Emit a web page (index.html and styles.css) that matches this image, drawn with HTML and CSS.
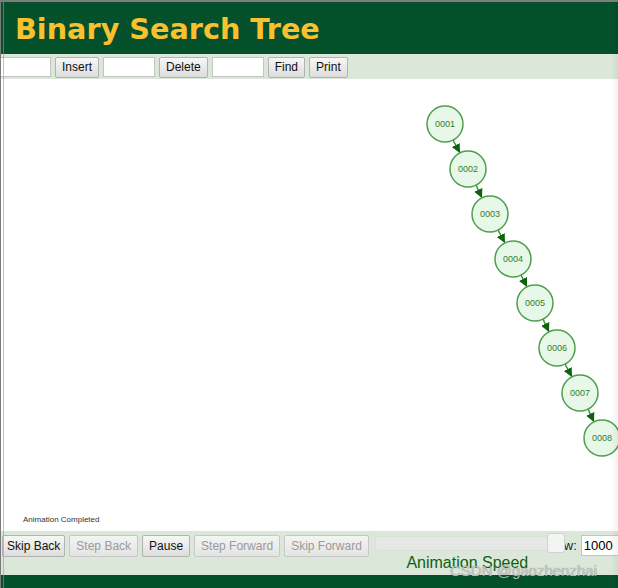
FILE: index.html
```html
<!DOCTYPE html>
<html>
<head>
<meta charset="utf-8">
<title>Binary Search Tree</title>
<link rel="stylesheet" href="styles.css">
</head>
<body>
<div class="page">
  <header class="title-bar"><h1 class="title">Binary Search Tree</h1></header>
  <div class="toolbar">
    <input class="field first" type="text">
    <button class="btn">Insert</button>
    <input class="field" type="text">
    <button class="btn">Delete</button>
    <input class="field" type="text">
    <button class="btn">Find</button>
    <button class="btn">Print</button>
  </div>
  <main class="canvas">
    <svg class="tree" width="618" height="452" viewBox="0 79 618 452" xmlns="http://www.w3.org/2000/svg">
      <defs>
        <marker id="arrow" viewBox="0 0 10 10" refX="10" refY="5" markerWidth="9" markerHeight="9" markerUnits="userSpaceOnUse" orient="auto">
          <path d="M0,0 L10,5 L0,10 z" fill="#0b640b"/>
        </marker>
      </defs>
      <g class="edges">
        <line x1="453" y1="140" x2="460" y2="153" marker-end="url(#arrow)"/>
        <line x1="476" y1="185" x2="482" y2="198" marker-end="url(#arrow)"/>
        <line x1="498" y1="230" x2="505" y2="243" marker-end="url(#arrow)"/>
        <line x1="521" y1="275" x2="527" y2="287" marker-end="url(#arrow)"/>
        <line x1="543" y1="319" x2="549" y2="332" marker-end="url(#arrow)"/>
        <line x1="565" y1="364" x2="572" y2="377" marker-end="url(#arrow)"/>
        <line x1="588" y1="409" x2="594" y2="422" marker-end="url(#arrow)"/>
      </g>
      <g class="nodes">
        <circle cx="445" cy="124" r="18"/><text x="445" y="127">0001</text>
        <circle cx="468" cy="169" r="18"/><text x="468" y="172">0002</text>
        <circle cx="490" cy="214" r="18"/><text x="490" y="217">0003</text>
        <circle cx="513" cy="259" r="18"/><text x="513" y="262">0004</text>
        <circle cx="535" cy="303" r="18"/><text x="535" y="306">0005</text>
        <circle cx="557" cy="348" r="18"/><text x="557" y="351">0006</text>
        <circle cx="580" cy="393" r="18"/><text x="580" y="396">0007</text>
        <circle cx="602" cy="438" r="18"/><text x="602" y="441">0008</text>
      </g>
    </svg>
    <div class="status">Animation Completed</div>
  </main>
  <div class="controls">
    <button class="btn big first">Skip Back</button>
    <button class="btn big" disabled>Step Back</button>
    <button class="btn big">Pause</button>
    <button class="btn big" disabled>Step Forward</button>
    <button class="btn big" disabled>Skip Forward</button>
    <div class="speed">
      <div class="track"><span class="thumb"></span></div>
      <div class="speed-label">Animation Speed</div>
    </div>
    <span class="w-label">w:</span>
    <input class="field width-field" type="text" value="1000">
  </div>
  <footer class="footer"></footer>
  <div class="edge-left"></div>
  <div class="edge-right"></div>
  <div class="watermark">CSDN @gaozhenzhai</div>
</div>
</body>
</html>
```
FILE: styles.css
```css
html, body {
  margin: 0;
  padding: 0;
  background: #ffffff;
}
.page {
  position: relative;
  width: 618px;
  height: 588px;
  overflow: hidden;
  font-family: "Liberation Sans", Arial, sans-serif;
  display: flex;
  flex-direction: column;
  border-top: 2px solid #7d7d7d;
  box-sizing: border-box;
}
.title-bar {
  background: #03502b;
  height: 52px;
  flex: none;
  display: flex;
  align-items: center;
  padding-left: 15px;
}
.title {
  margin: 0;
  font-family: "DejaVu Sans", Verdana, sans-serif;
  font-weight: bold;
  font-size: 28.7px;
  color: #f8c12d;
  white-space: nowrap;
  position: relative;
  top: 1px;
}
.toolbar {
  flex: none;
  height: 25px;
  background: #dae7d9;
  display: flex;
  align-items: flex-start;
  gap: 4px;
  padding-top: 3px;
  box-sizing: border-box;
}
.field {
  flex: none;
  width: 52px;
  height: 20px;
  box-sizing: border-box;
  border: 1px solid #c4c4c4;
  background: #fff;
  padding: 0 2px;
  font-family: "Liberation Sans", Arial, sans-serif;
  font-size: 13px;
}
.field.first {
  margin-left: -1px;
}
.btn {
  flex: none;
  white-space: nowrap;
  height: 21px;
  box-sizing: border-box;
  border: 1px solid #b3b3b3;
  border-radius: 2px;
  background: linear-gradient(#f7f7f7, #dddddd);
  padding: 0 6px;
  font-family: "Liberation Sans", Arial, sans-serif;
  font-size: 12px;
  color: #111;
  line-height: 19px;
}
.btn[disabled] {
  color: #9a9a9a;
  background: linear-gradient(#f4f4f4, #e4e4e4);
  border-color: #c8c8c8;
}
.canvas {
  position: relative;
  flex: none;
  height: 452px;
  background: #fff;
  display: flex;
  flex-direction: column;
  justify-content: flex-end;
}
.tree {
  position: absolute;
  left: 0;
  top: 0;
}
.edges line {
  stroke: #3f8f3f;
  stroke-width: 1.5;
}
.nodes circle {
  fill: #e8f8e8;
  stroke: #4f9e4f;
  stroke-width: 1.5;
}
.nodes text {
  font-family: "Liberation Sans", Arial, sans-serif;
  font-size: 9px;
  fill: #2f7f2f;
  text-anchor: middle;
}
.status {
  font-size: 8px;
  color: #333;
  padding-left: 23px;
  padding-bottom: 7px;
}
.controls {
  flex: none;
  height: 44px;
  background: #dae7d9;
  display: flex;
  align-items: flex-start;
  gap: 4px;
  padding-top: 4px;
  box-sizing: border-box;
}
.btn.big {
  height: 22px;
  line-height: 20px;
  padding: 0 6px;
}
.btn.big.first {
  margin-left: 2px;
  padding: 0 4px;
}
.btn.big.tight {
  padding: 0 5px;
}
.speed {
  flex: none;
  width: 185px;
  margin-left: 2px;
  position: relative;
}
.track {
  height: 15px;
  margin-top: 1px;
  border-radius: 3px;
  background: #e6e8e6;
  border: 1px solid #dcdedc;
  box-sizing: border-box;
  position: relative;
}
.thumb {
  position: absolute;
  left: 171px;
  top: -4px;
  width: 18px;
  height: 20px;
  border-radius: 3px;
  background: #f3f4f3;
  border: 1px solid #cfd2cf;
  box-sizing: border-box;
}
.speed-label {
  font-size: 16px;
  color: #115f11;
  text-align: center;
  white-space: nowrap;
  margin-top: 3px;
  line-height: 18px;
}
.w-label {
  flex: none;
  font-size: 13px;
  color: #222;
  margin-left: 0;
  line-height: 22px;
}
.width-field {
  height: 21px;
  width: 44px;
  margin-left: 0;
}
.footer {
  flex: 1;
  background: #03502b;
}
.edge-left {
  position: absolute;
  left: 0;
  top: 0;
  bottom: 0;
  width: 1px;
  background: #7a7a7a;
  box-shadow: 3px 0 0 rgba(225, 120, 120, 0.6);
}
.edge-right {
  position: absolute;
  right: 0;
  top: 0;
  bottom: 0;
  width: 7px;
  background: linear-gradient(to right, rgba(0, 0, 0, 0), rgba(0, 0, 0, 0.05));
}
.watermark {
  position: absolute;
  left: 450px;
  top: 560px;
  font-size: 15px;
  color: rgba(205, 205, 205, 0.85);
  text-shadow: 0 0 1px rgba(80, 80, 80, 0.6);
  white-space: nowrap;
}
```
